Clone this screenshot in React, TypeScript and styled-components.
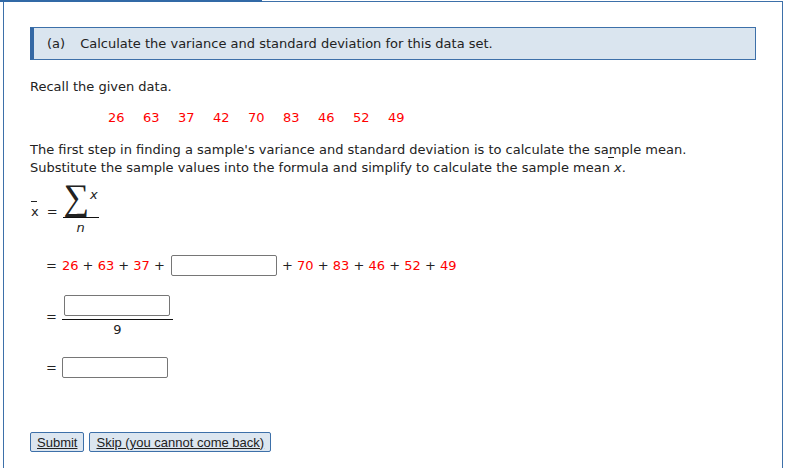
import React from "react"
import styled, { createGlobalStyle } from "styled-components"

const GlobalStyle = createGlobalStyle`
  html, body {
    margin: 0;
    padding: 0;
    background: #fff;
  }
  body {
    font-family: "DejaVu Sans", Verdana, sans-serif;
    font-size: 13px;
    color: #222;
  }
`

const data = [26, 63, 37, 42, 70, 83, 46, 52, 49]

const App = () => {
  return (
    <>
      <GlobalStyle />
      <TabMark />
      <Frame>
        <PartHeader>
          <PartLabel>(a)</PartLabel>
          Calculate the variance and standard deviation for this data set.
        </PartHeader>

        <Line $top={18}>Recall the given data.</Line>

        <DataRow>
          {data.map((d, i) => (
            <DataCell key={`d-${i}`}>{d}</DataCell>
          ))}
        </DataRow>

        <Paragraph>
          The first step in finding a sample's variance and standard deviation is to calculate the
          sample mean.
          <br />
          Substitute the sample values into the formula and simplify to calculate the sample mean{" "}
          <XBar $shift>x</XBar>.
        </Paragraph>

        <Formula>
          <XBar>x</XBar>
          <Eq>=</Eq>
          <Fraction>
            <SumNum>
              <Sigma>∑</Sigma>
              <SupX>x</SupX>
            </SumNum>
            <FracBar $w={36} />
            <Den>
              <i>n</i>
            </Den>
          </Fraction>
        </Formula>

        <EqRow $top={19}>
          <Eq>=</Eq>
          <Red>26</Red> + <Red>63</Red> + <Red>37</Red> + <Blank $w={106} $ml={2} />
          <After>
            + <Red>70</Red> + <Red>83</Red> + <Red>46</Red> + <Red>52</Red> + <Red>49</Red>
          </After>
        </EqRow>

        <EqRow $top={19}>
          <Eq>=</Eq>
          <Fraction>
            <Blank $w={106} />
            <FracBar $w={111} />
            <Den>9</Den>
          </Fraction>
        </EqRow>

        <EqRow $top={19}>
          <Eq>=</Eq>
          <Blank $w={106} />
        </EqRow>

        <Buttons>
          <Button>Submit</Button>
          <Button>Skip (you cannot come back)</Button>
        </Buttons>
      </Frame>
    </>
  )
}

export default App

const TabMark = styled.div`
  position: absolute;
  top: 0;
  left: 0;
  width: 262px;
  height: 2px;
  background: #3169a6;
`

const Frame = styled.div`
  box-sizing: border-box;
  margin: 1px 0 0 3px;
  width: 780px;
  min-height: 480px;
  border: 1px solid #3d70a9;
  border-bottom: none;
  padding: 25px 26px;
`

const PartHeader = styled.div`
  box-sizing: border-box;
  width: 726px;
  height: 33px;
  display: flex;
  align-items: center;
  padding-left: 13px;
  background: #dae5ef;
  border: 1px solid #3d70a9;
  border-left: 4px solid #3468a4;
`

const PartLabel = styled.span`
  margin-right: 15px;
`

const Line = styled.div<{ $top: number }>`
  margin-top: ${p => p.$top}px;
  line-height: 18px;
`

const DataRow = styled.div`
  display: flex;
  margin-top: 13px;
  padding-left: 78px;
  line-height: 18px;
`

const DataCell = styled.span`
  width: 35px;
  color: #f00;
`

const Paragraph = styled.div`
  margin-top: 14px;
  line-height: 18px;
`

const XBar = styled.span<{ $shift?: boolean }>`
  position: relative;
  font-style: ${p => (p.$shift ? "italic" : "normal")};
  &::before {
    content: "";
    position: absolute;
    left: ${p => (p.$shift ? "-6px" : "0")};
    top: ${p => (p.$shift ? "-3px" : "-2px")};
    width: 6px;
    height: 1px;
    background: #222;
  }
`

const Formula = styled.div`
  display: flex;
  align-items: center;
  margin-top: 10px;
  padding-left: 1px;
  line-height: 18px;
`

const Eq = styled.span`
  margin: 0 5px 0 8px;
`

const Fraction = styled.span`
  display: inline-flex;
  flex-direction: column;
  align-items: center;
`

const SumNum = styled.span`
  display: flex;
  align-items: flex-start;
  height: 27px;
  overflow: visible;
`

const Sigma = styled.span`
  font-family: "Liberation Serif", "DejaVu Serif", serif;
  font-size: 36px;
  line-height: 36px;
  margin-top: -8px;
  height: 27px;
`

const SupX = styled.span`
  font-style: italic;
  font-size: 13px;
  line-height: 13px;
  margin: 1px 0 0 1px;
`

const FracBar = styled.span<{ $w: number }>`
  display: block;
  width: ${p => p.$w}px;
  height: 1px;
  margin: 3px 0 2px;
  background: #111;
`

const Den = styled.span`
  line-height: 16px;
`

const EqRow = styled.div<{ $top: number }>`
  display: flex;
  align-items: center;
  white-space: pre;
  margin-top: ${p => p.$top}px;
  padding-left: 8px;
  line-height: 18px;
`

const Red = styled.span`
  color: #f00;
`

const After = styled.span`
  margin-left: 5px;
`

const Blank = styled.span<{ $w: number; $ml?: number }>`
  display: inline-block;
  box-sizing: border-box;
  width: ${p => p.$w}px;
  height: 21px;
  margin-left: ${p => p.$ml ?? 0}px;
  border: 1px solid #767676;
  border-radius: 2px;
  background: #fff;
`

const Buttons = styled.div`
  display: flex;
  gap: 5px;
  margin-top: 54px;
`

const Button = styled.button`
  box-sizing: border-box;
  height: 20px;
  padding: 0 6px;
  font-family: "Liberation Sans", Arial, sans-serif;
  font-size: 13px;
  color: #222;
  text-decoration: underline;
  background: #dce6f0;
  border: 1px solid #3d70a9;
  border-radius: 2px;
  cursor: pointer;
`
